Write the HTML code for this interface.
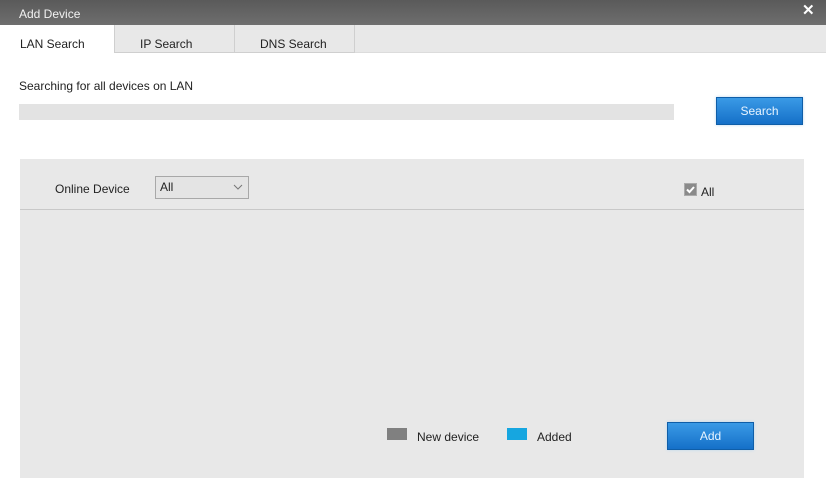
<!DOCTYPE html>
<html><head><style>
*{margin:0;padding:0;box-sizing:border-box}
body{width:826px;height:499px;background:#fff;font-family:"Liberation Sans",sans-serif;font-size:12px;color:#222;position:relative;overflow:hidden}
.a{position:absolute}
.btn{position:absolute;background:linear-gradient(#3a9ae6,#1570c8);border:1px solid #0f5ea8;color:#e8f4ff;text-align:center;font-size:12px;box-shadow:0 0 3px #bcd8f0}
</style></head><body>
<div class="a" style="left:0;top:0;width:826px;height:25px;background:linear-gradient(#5a5a5a,#6e6e6e)"></div>
<div class="a" style="left:19px;top:7px;color:#f2f2f2;font-size:12px">Add Device</div>
<div class="a" style="left:802px;top:1px;color:#fff;font-size:15px;font-weight:bold">✕</div>
<div class="a" style="left:114px;top:25px;width:712px;height:28px;background:#e8e8e8;border-bottom:1px solid #dcdcdc"></div>
<div class="a" style="left:114px;top:25px;width:121px;height:28px;border-left:1px solid #cfcfcf;border-right:1px solid #cfcfcf;border-bottom:1px solid #cfcfcf"></div>
<div class="a" style="left:234px;top:25px;width:121px;height:28px;border-right:1px solid #cfcfcf;border-bottom:1px solid #cfcfcf"></div>
<div class="a" style="left:20px;top:37px">LAN Search</div>
<div class="a" style="left:140px;top:37px">IP Search</div>
<div class="a" style="left:260px;top:37px">DNS Search</div>
<div class="a" style="left:19px;top:79px">Searching for all devices on LAN</div>
<div class="a" style="left:19px;top:104px;width:655px;height:16px;background:#e3e3e3"></div>
<div class="btn" style="left:716px;top:97px;width:87px;height:28px;line-height:26px">Search</div>
<div class="a" style="left:20px;top:159px;width:784px;height:319px;background:#e8e8e8"></div>
<div class="a" style="left:20px;top:209px;width:784px;height:1px;background:#c8c8c8"></div>
<div class="a" style="left:55px;top:182px">Online Device</div>
<div class="a" style="left:155px;top:176px;width:94px;height:23px;border:1px solid #a8a8a8;background:#e4e4e4;padding:3px 4px">All</div>
<svg class="a" style="left:233px;top:184px" width="10" height="6"><path d="M1 1L5 5L9 1" stroke="#777" fill="none"/></svg>
<div class="a" style="left:684px;top:183px;width:13px;height:13px;background:#8a8a8a;border:1px solid #aaa"></div>
<svg class="a" style="left:685px;top:184px" width="11" height="11"><path d="M2 5.5L4.5 8L9 3" stroke="#fff" stroke-width="2" fill="none"/></svg>
<div class="a" style="left:701px;top:185px">All</div>
<div class="a" style="left:387px;top:428px;width:20px;height:12px;background:#808080"></div>
<div class="a" style="left:417px;top:430px">New device</div>
<div class="a" style="left:507px;top:428px;width:20px;height:12px;background:#16a6e0"></div>
<div class="a" style="left:537px;top:430px">Added</div>
<div class="btn" style="left:667px;top:422px;width:87px;height:28px;line-height:26px">Add</div>
</body></html>
